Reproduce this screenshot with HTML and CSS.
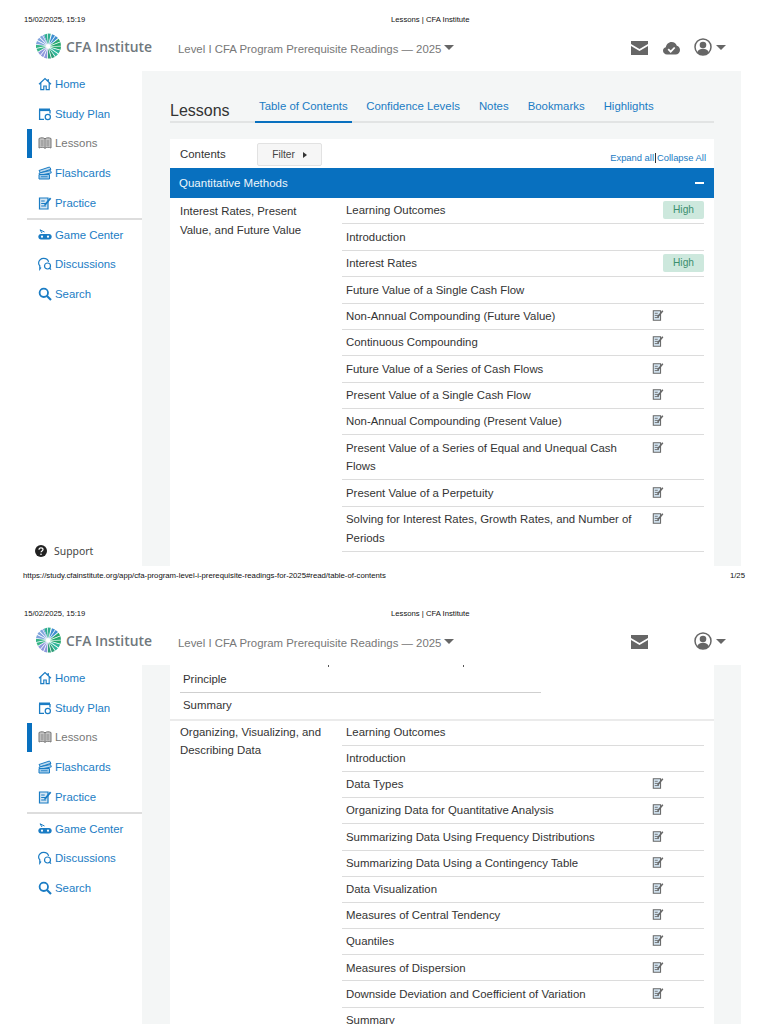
FILE: index.html
```html
<!DOCTYPE html>
<html lang="en">
<head>
<meta charset="utf-8">
<title>Lessons | CFA Institute</title>
<link rel="stylesheet" href="styles.css">
</head>
<body>
<svg class="sprite" aria-hidden="true">
  <defs>
    <symbol id="logo" viewBox="0 0 25 25">
      <g fill="#2fae8f"><path d="M12 11 8 1.2 11 .2Z"/><path d="M12.5 11 11.7 .1 14.8.3Z"/></g>
      <g fill="#3f8fd0"><path d="M13 11 16 .8 19 2Z"/><path d="M13.5 11.4 19.6 2.4 22 4.4Z"/></g>
      <g fill="#27a86f"><path d="M14 12 22.6 5.2 24.2 8Z"/><path d="M14 12.7 24.5 8.8 25 12.2Z"/><path d="M14 13.2 25 13 24.6 16.2Z"/></g>
      <g fill="#2fb59a"><path d="M13.8 14 24.2 17 22.6 20Z"/><path d="M13.2 14.4 22 20.8 19.6 23Z"/></g>
      <g fill="#2d9d78"><path d="M12.8 14.6 18.8 23.6 15.8 24.8Z"/><path d="M12.2 14.8 15 25 11.8 25Z"/></g>
      <g fill="#8d98dc"><path d="M11.6 14.6 11 25 8 24.2Z"/><path d="M11 14.2 7.2 23.8 4.8 22Z"/><path d="M10.6 13.8 4.2 21.4 2.2 19Z"/></g>
      <g fill="#36b487"><path d="M10.4 13.2 1.8 18.2.5 15.2Z"/><path d="M10.2 12.6 0 14.4 0 11.2Z"/></g>
      <g fill="#7fa3dc"><path d="M10.4 12 0 10.4 1 7.4Z"/><path d="M10.8 11.4 1.4 6.6 3.2 4.2Z"/><path d="M11.2 11 3.8 3.6 6.2 2Z"/><path d="M11.6 10.8 6.8 1.8 8 1.2Z"/></g>
    </symbol>
    <symbol id="i-home" viewBox="0 0 14 14">
      <path d="M1 7.2 7 1.6l6 5.6M2.8 6v6.600h3V9h2.400v3.600h3V6M10.200 2v2.200" fill="none" stroke="currentColor" stroke-width="1.200"/>
    </symbol>
    <symbol id="i-plan" viewBox="0 0 14 14">
      <path d="M1 1.500h11v2.600H1z" fill="currentColor"/>
      <path d="M1.600 3v9.400H6M12 3v3.400" fill="none" stroke="currentColor" stroke-width="1.300"/>
      <circle cx="9.800" cy="10" r="2.600" fill="none" stroke="currentColor" stroke-width="1.200"/>
    </symbol>
    <symbol id="i-book" viewBox="0 0 14 14">
      <path d="M1 2.500c2-1 4.500-1 6 .3 1.500-1.300 4-1.300 6-.3v9.500c-2-1-4.500-1-6 .3-1.500-1.300-4-1.300-6-.3z" fill="#c4c4c4" stroke="#777" stroke-width="1"/>
      <path d="M7 2.800v9.500M2.800 5h2.700M2.800 7h2.700M2.800 9h2.700M8.500 5h2.700M8.500 7h2.700M8.500 9h2.700" fill="none" stroke="#777" stroke-width=".8"/>
    </symbol>
    <symbol id="i-cards" viewBox="0 0 14 14">
      <path d="M1 4.500 11.500 1 13 3.300 2.500 6.800z" fill="#bcd9ee" stroke="currentColor" stroke-width="1"/>
      <path d="M1 7 12.500 4.500l.8 2.400L2 9.300z" fill="#bcd9ee" stroke="currentColor" stroke-width="1"/>
      <path d="M1 8.500h10.500v4.500H1z" fill="#9cc8e8" stroke="currentColor" stroke-width="1"/>
      <path d="M3 10.700h6.500" stroke="currentColor" stroke-width=".8"/>
    </symbol>
    <symbol id="i-note" viewBox="0 0 14 14">
      <path d="M1.500 2h8.500v11H1.500z" fill="#d5e6f3" stroke="currentColor" stroke-width="1.200"/>
      <path d="M3.200 5h3.500M3.200 7.500h5M3.200 10h5" stroke="currentColor" stroke-width="1"/>
      <path d="M6.500 8 12 1.500l1.300 1.200L7.800 9.200 6 9.800z" fill="currentColor"/>
    </symbol>
    <symbol id="i-game" viewBox="0 0 14 14">
      <path d="M4 5 2 1.800 6.500 4" fill="none" stroke="currentColor" stroke-width="1"/>
      <path d="M3 6h8c1.500 0 2.700 1.200 2.700 2.700S12.500 11.500 11 11.500H3C1.500 11.500.3 10.200.3 8.700S1.500 6 3 6z" fill="currentColor"/>
      <circle cx="4" cy="8.700" r="1.100" fill="#fff"/><circle cx="10" cy="8.700" r="1.100" fill="#fff"/>
    </symbol>
    <symbol id="i-chat" viewBox="0 0 14 14">
      <path d="M3 10.500 1.800 12.200V8.800C.9 8 .6 7 .6 6c0-2.700 2.400-4.600 5-4.600 2.500 0 4.500 1.400 5 3.400" fill="none" stroke="currentColor" stroke-width="1.200"/>
      <circle cx="9.500" cy="9" r="3" fill="none" stroke="currentColor" stroke-width="1.200"/>
      <path d="m11.500 11.200 1.500 1.500" stroke="currentColor" stroke-width="1.200"/>
    </symbol>
    <symbol id="i-search" viewBox="0 0 14 14">
      <circle cx="5.800" cy="5.800" r="4.200" fill="none" stroke="currentColor" stroke-width="1.800"/>
      <path d="m9 9 4 4" stroke="currentColor" stroke-width="2.200"/>
    </symbol>
    <symbol id="i-mail" viewBox="0 0 17 14">
      <path d="M0 0h17v3L8.500 8 0 3z M0 5l8.500 5L17 5v9H0z" fill="currentColor"/>
    </symbol>
    <symbol id="i-cloud" viewBox="0 0 17 14">
      <path d="M4 13.500C1.800 13.500 0 11.800 0 9.800c0-1.700 1-3 2.800-3.500C3.300 3.300 5.600 1 8.600 1c2.600 0 4.500 1.500 5.200 3.700 1.900.5 3.200 2.300 3.200 4.300 0 2.500-2 4.500-4.500 4.500z" fill="currentColor"/>
      <path d="m5.200 8.200 2.500 2.500 4-4.200" fill="none" stroke="#fff" stroke-width="1.800"/>
    </symbol>
    <symbol id="i-user" viewBox="0 0 18 18">
      <circle cx="9" cy="9" r="8" fill="#fff" stroke="currentColor" stroke-width="1.500"/>
      <circle cx="9" cy="7" r="3.300" fill="currentColor"/>
      <path d="M3.300 14.500c.6-2.600 2.700-3.800 5.700-3.800s5.100 1.200 5.700 3.800C13 16.200 11 17 9 17s-4-.8-5.700-2.500z" fill="currentColor"/>
    </symbol>
    <symbol id="i-help" viewBox="0 0 12 12">
      <circle cx="6" cy="6" r="6" fill="#222"/>
      <path d="M4 4.700c0-1.200.9-1.900 2-1.900s2 .7 2 1.700c0 1.400-2 1.400-2 2.800" fill="none" stroke="#fff" stroke-width="1.200"/>
      <circle cx="6" cy="9.300" r=".8" fill="#fff"/>
    </symbol>
  </defs>
</svg>

<section class="page page-first">
  <div class="print-head"><span class="print-date">15/02/2025, 15:19</span><span class="print-title">Lessons | CFA Institute</span></div>
  <header class="brand-bar">
    <svg class="logo"><use href="#logo"/></svg>
    <span class="logo-text">CFA Institute</span>
    <span class="course">Level I CFA Program Prerequisite Readings — 2025</span>
    <span class="caret"></span>
    <span class="tools">
      <svg class="tool-mail"><use href="#i-mail"/></svg>
      <svg class="tool-cloud"><use href="#i-cloud"/></svg>
      <svg class="tool-user"><use href="#i-user"/></svg>
      <span class="caret caret-user"></span>
    </span>
  </header>
  <div class="app">
    <nav class="side">
      <a class="nav-item"><svg class="nav-icon"><use href="#i-home"/></svg>Home</a>
      <a class="nav-item"><svg class="nav-icon"><use href="#i-plan"/></svg>Study Plan</a>
      <a class="nav-item is-active"><svg class="nav-icon"><use href="#i-book"/></svg>Lessons</a>
      <a class="nav-item"><svg class="nav-icon"><use href="#i-cards"/></svg>Flashcards</a>
      <a class="nav-item"><svg class="nav-icon"><use href="#i-note"/></svg>Practice</a>
      <div class="nav-rule"></div>
      <a class="nav-item"><svg class="nav-icon"><use href="#i-game"/></svg>Game Center</a>
      <a class="nav-item"><svg class="nav-icon"><use href="#i-chat"/></svg>Discussions</a>
      <a class="nav-item"><svg class="nav-icon"><use href="#i-search"/></svg>Search</a>
      <div class="support"><svg class="help-icon"><use href="#i-help"/></svg>Support</div>
    </nav>
    <main class="stage">
      <div class="tabs">
        <h1 class="tabs-title">Lessons</h1>
        <a class="tab is-current">Table of Contents</a>
        <a class="tab">Confidence Levels</a>
        <a class="tab">Notes</a>
        <a class="tab">Bookmarks</a>
        <a class="tab">Highlights</a>
      </div>
      <div class="panel">
        <div class="panel-top">
          <span class="contents-label">Contents</span>
          <button class="filter">Filter<span class="filter-arrow"></span></button>
          <span class="expand"><a>Expand all</a><span class="expand-sep"></span><a>Collapse All</a></span>
        </div>
        <div class="band"><span>Quantitative Methods</span><span class="minus"></span></div>
        <div class="reading">
          <div class="reading-name">Interest Rates, Present Value, and Future Value</div>
          <ul class="lessons">
            <li class="lesson"><span class="lesson-name">Learning Outcomes</span><span class="badge">High</span></li>
            <li class="lesson"><span class="lesson-name">Introduction</span></li>
            <li class="lesson"><span class="lesson-name">Interest Rates</span><span class="badge">High</span></li>
            <li class="lesson"><span class="lesson-name">Future Value of a Single Cash Flow</span></li>
            <li class="lesson"><span class="lesson-name">Non-Annual Compounding (Future Value)</span><svg class="edit"><use href="#i-note"/></svg></li>
            <li class="lesson"><span class="lesson-name">Continuous Compounding</span><svg class="edit"><use href="#i-note"/></svg></li>
            <li class="lesson"><span class="lesson-name">Future Value of a Series of Cash Flows</span><svg class="edit"><use href="#i-note"/></svg></li>
            <li class="lesson"><span class="lesson-name">Present Value of a Single Cash Flow</span><svg class="edit"><use href="#i-note"/></svg></li>
            <li class="lesson"><span class="lesson-name">Non-Annual Compounding (Present Value)</span><svg class="edit"><use href="#i-note"/></svg></li>
            <li class="lesson"><span class="lesson-name">Present Value of a Series of Equal and Unequal Cash Flows</span><svg class="edit"><use href="#i-note"/></svg></li>
            <li class="lesson"><span class="lesson-name">Present Value of a Perpetuity</span><svg class="edit"><use href="#i-note"/></svg></li>
            <li class="lesson"><span class="lesson-name">Solving for Interest Rates, Growth Rates, and Number of Periods</span><svg class="edit"><use href="#i-note"/></svg></li>
          </ul>
        </div>
      </div>
    </main>
  </div>
  <footer class="print-foot"><span>https://study.cfainstitute.org/app/cfa-program-level-i-prerequisite-readings-for-2025#read/table-of-contents</span><span>1/25</span></footer>
</section>

<section class="page page-second">
  <div class="print-head"><span class="print-date">15/02/2025, 15:19</span><span class="print-title">Lessons | CFA Institute</span></div>
  <header class="brand-bar">
    <svg class="logo"><use href="#logo"/></svg>
    <span class="logo-text">CFA Institute</span>
    <span class="course">Level I CFA Program Prerequisite Readings — 2025</span>
    <span class="caret"></span>
    <span class="tools">
      <svg class="tool-mail"><use href="#i-mail"/></svg>
      <svg class="tool-cloud is-off"><use href="#i-cloud"/></svg>
      <svg class="tool-user"><use href="#i-user"/></svg>
      <span class="caret caret-user"></span>
    </span>
  </header>
  <div class="app">
    <nav class="side">
      <a class="nav-item"><svg class="nav-icon"><use href="#i-home"/></svg>Home</a>
      <a class="nav-item"><svg class="nav-icon"><use href="#i-plan"/></svg>Study Plan</a>
      <a class="nav-item is-active"><svg class="nav-icon"><use href="#i-book"/></svg>Lessons</a>
      <a class="nav-item"><svg class="nav-icon"><use href="#i-cards"/></svg>Flashcards</a>
      <a class="nav-item"><svg class="nav-icon"><use href="#i-note"/></svg>Practice</a>
      <div class="nav-rule"></div>
      <a class="nav-item"><svg class="nav-icon"><use href="#i-game"/></svg>Game Center</a>
      <a class="nav-item"><svg class="nav-icon"><use href="#i-chat"/></svg>Discussions</a>
      <a class="nav-item"><svg class="nav-icon"><use href="#i-search"/></svg>Search</a>
    </nav>
    <main class="stage">
      <div class="panel panel-cont">
        <span class="clip-mark clip-mark-a"></span>
        <span class="clip-mark clip-mark-b"></span>
        <div class="carry">
          <div class="carry-row">Principle</div>
          <div class="carry-row">Summary</div>
        </div>
        <div class="reading">
          <div class="reading-name">Organizing, Visualizing, and Describing Data</div>
          <ul class="lessons">
            <li class="lesson"><span class="lesson-name">Learning Outcomes</span></li>
            <li class="lesson"><span class="lesson-name">Introduction</span></li>
            <li class="lesson"><span class="lesson-name">Data Types</span><svg class="edit"><use href="#i-note"/></svg></li>
            <li class="lesson"><span class="lesson-name">Organizing Data for Quantitative Analysis</span><svg class="edit"><use href="#i-note"/></svg></li>
            <li class="lesson"><span class="lesson-name">Summarizing Data Using Frequency Distributions</span><svg class="edit"><use href="#i-note"/></svg></li>
            <li class="lesson"><span class="lesson-name">Summarizing Data Using a Contingency Table</span><svg class="edit"><use href="#i-note"/></svg></li>
            <li class="lesson"><span class="lesson-name">Data Visualization</span><svg class="edit"><use href="#i-note"/></svg></li>
            <li class="lesson"><span class="lesson-name">Measures of Central Tendency</span><svg class="edit"><use href="#i-note"/></svg></li>
            <li class="lesson"><span class="lesson-name">Quantiles</span><svg class="edit"><use href="#i-note"/></svg></li>
            <li class="lesson"><span class="lesson-name">Measures of Dispersion</span><svg class="edit"><use href="#i-note"/></svg></li>
            <li class="lesson"><span class="lesson-name">Downside Deviation and Coefficient of Variation</span><svg class="edit"><use href="#i-note"/></svg></li>
            <li class="lesson"><span class="lesson-name">Summary</span></li>
          </ul>
        </div>
      </div>
    </main>
  </div>
</section>
</body>
</html>
```
FILE: styles.css
```css
* { box-sizing: border-box; }
html, body { margin: 0; padding: 0; background: #fff; }
body {
  width: 768px;
  height: 1024px;
  overflow: hidden;
  font-family: "Liberation Sans", Arial, sans-serif;
  color: #333;
}
.sprite { position: absolute; width: 0; height: 0; }
svg { display: block; flex: none; }

.page { display: flex; flex-direction: column; height: 594px; overflow: hidden; }
.page-second { height: 430px; }

.print-head {
  position: relative;
  height: 31px;
  padding: 15px 0 0 24px;
  font-size: 7.6px;
  line-height: 9px;
  color: #111;
}
.print-title { position: absolute; left: 391px; top: 15px; font-size: 7.7px; }

.brand-bar { display: flex; align-items: center; height: 40px; padding: 0 0 10px 36px; }
.logo { width: 25px; height: 26px; }
.logo-text {
  margin-left: 5px;
  width: 112px;
  font-family: "Open Sans", sans-serif;
  font-size: 13.9px;
  font-weight: 600;
  color: #6f787d;
  white-space: nowrap;
}
.course { padding-top: 6px; font-size: 11.4px; color: #777; white-space: nowrap; }
.caret {
  width: 0;
  height: 0;
  margin: 2px 0 0 3px;
  border-left: 5.5px solid transparent;
  border-right: 5.5px solid transparent;
  border-top: 5px solid #666;
}
.tools { display: flex; align-items: center; margin-left: auto; padding-right: 42px; color: #666; }
.tool-mail { width: 17px; height: 14px; margin-top: 3px; }
.tool-cloud { width: 17px; height: 14px; margin: 4px 0 0 15px; }
.tool-cloud.is-off { visibility: hidden; }
.tool-user { width: 18px; height: 18px; margin-left: 14px; margin-top: 2px; }
.caret-user { margin: 3px 0 0 4px; }

.app { display: flex; flex: 1; min-height: 0; padding-right: 27px; }
.side { display: flex; flex-direction: column; flex: none; width: 142px; margin-top: -1.5px; padding: 0 0 8.5px 27px; }
.nav-item {
  display: flex;
  align-items: center;
  gap: 3px;
  height: 29.6px;
  padding-left: 6px;
  border-left: 5px solid transparent;
  font-size: 11.4px;
  color: #1a7cc4;
}
.nav-item.is-active { border-left-color: #0870bf; color: #777; }
.nav-icon { width: 14px; height: 14px; }
.nav-rule { height: 2px; margin: .5px 0 0; background: #ddd; }
.support {
  display: flex;
  align-items: center;
  gap: 7px;
  margin-top: auto;
  padding-left: 8px;
  font-family: "Noto Sans", sans-serif;
  font-size: 10.4px;
  color: #444;
}
.help-icon { width: 12px; height: 12px; }

.stage {
  display: flex;
  flex-direction: column;
  flex: 1;
  padding: 0 27px 0 28px;
  background: #f4f6f6;
  overflow: hidden;
}

.tabs {
  display: flex;
  flex: none;
  align-items: flex-end;
  height: 52px;
  margin-bottom: 16px;
  border-bottom: 2px solid #e2e4e4;
}
.tabs-title {
  width: 85px;
  margin: 0;
  font-size: 16px;
  font-weight: 400;
  line-height: 20px;
  color: #333;
}
.tab {
  margin-bottom: -2px;
  padding: 0 4px 6px;
  margin-right: 11px;
  border-bottom: 2px solid transparent;
  font-size: 11.4px;
  line-height: 18px;
  color: #1a7cc4;
  white-space: nowrap;
}
.tab.is-current { border-bottom-color: #0870bf; margin-right: 10.500px; }

.panel { flex: 1 0 auto; background: #fff; }
.panel-top { display: flex; align-items: flex-end; height: 29px; padding: 0 8px 0 10px; }
.contents-label { width: 77px; padding-bottom: 8px; font-size: 11.4px; color: #333; }
.filter {
  display: flex;
  align-items: center;
  justify-content: center;
  gap: 8px;
  width: 65px;
  height: 23px;
  margin-bottom: 2px;
  padding: 0;
  border: 1px solid #e2e2e2;
  border-radius: 2px;
  background: #f6f6f6;
  font-family: inherit;
  font-size: 10.2px;
  color: #444;
}
.filter-arrow {
  width: 0;
  height: 0;
  border-top: 3px solid transparent;
  border-bottom: 3px solid transparent;
  border-left: 4px solid #333;
}
.expand {
  display: flex;
  align-items: center;
  margin-left: auto;
  padding-bottom: 5px;
  font-size: 9.4px;
  color: #1a7cc4;
}
.expand-sep { width: 1px; height: 10px; margin: 0 1px; background: #333; }
.band {
  display: flex;
  align-items: center;
  justify-content: space-between;
  height: 30px;
  padding: 0 10px 0 9px;
  background: #0870bf;
  font-size: 11.5px;
  color: #eef6fb;
}
.minus { width: 9px; height: 2px; background: #fff; }

.reading { display: flex; padding-left: 10px; }
.reading-name { flex: none; width: 162px; padding: 4px 17px 0 0; font-size: 11.4px; line-height: 18.8px; color: #333; }
.lessons { flex: 1; margin: 0 10px 0 0; padding: 0; list-style: none; }
.lesson {
  display: flex;
  align-items: flex-start;
  position: relative;
  padding: 3.4px 0 3.4px 4px;
  border-bottom: 1px solid #dcdcdc;
  font-size: 11.4px;
  line-height: 18.6px;
  color: #333;
}
.lesson-name { width: 296px; }
.badge {
  position: absolute;
  right: 0;
  top: 3px;
  width: 41px;
  height: 18px;
  border-radius: 2px;
  background: #cde8dd;
  font-size: 10.2px;
  line-height: 18px;
  text-align: center;
  color: #3b8f6e;
}
.edit { width: 12px; height: 12px; margin: 2px 0 0 10px; color: #666; }

.panel-cont { position: relative; }
.clip-mark { position: absolute; top: 0; width: 1px; height: 1.5px; background: #555; }
.clip-mark-a { left: 158px; }
.clip-mark-b { left: 293px; }
.carry { margin-bottom: -1px; border-bottom: 2px solid #ebebeb; padding-left: 10px; }
.carry-row { width: 361px; padding: 5px 0 4px 3px; font-size: 11.4px; line-height: 18.3px; color: #333; }
.carry-row:first-child { border-bottom: 1px solid #cfcfcf; }
.carry-row:last-child { padding: 3px 0 4px 3px; }
.page-second .reading-name { padding-top: 3px; }
.page-second .lesson { padding-top: 3.3px; padding-bottom: 3.3px; }
.print-foot {
  display: flex;
  flex: none;
  justify-content: space-between;
  height: 28px;
  padding: 5px 23px 0 23px;
  font-size: 7.77px;
  line-height: 9px;
  color: #111;
}
```
